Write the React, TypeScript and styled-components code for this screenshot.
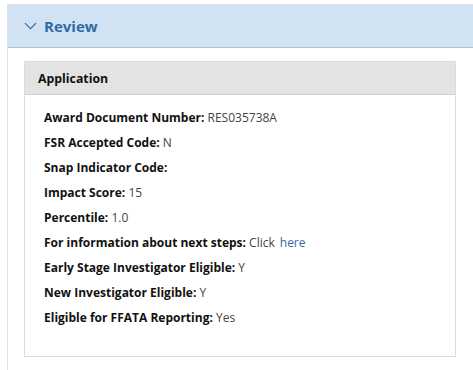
import styled, { createGlobalStyle } from "styled-components";

const Global = createGlobalStyle`
  body {
    margin: 0;
    background: #fff;
    font-family: "Open Sans", "Noto Sans", sans-serif;
    color: #333;
  }
`;

const Page = styled.div`
  padding: 4px 0 0 7px;
  height: 366px;
  overflow: hidden;
`;

const Panel = styled.section`
  border-left: 1px solid #dbe3ea;
  border-top: 1px solid #dde6ee;
  height: 100%;
`;

const PanelHeader = styled.div`
  display: flex;
  align-items: center;
  gap: 7px;
  height: 42px;
  padding-left: 16px;
  background: #d1e3f3;
  border-bottom: 1px solid #aec4d8;
`;

const Title = styled.h2`
  margin: 0;
  font-size: 15px;
  font-weight: 700;
  color: #2f6ca6;
`;

const PanelBody = styled.div`
  padding: 13px 17px 0 16px;
`;

const Card = styled.div`
  border: 1px solid #dcdcdc;
  height: 296px;
  box-sizing: border-box;
`;

const CardHeader = styled.div`
  display: flex;
  align-items: center;
  height: 32px;
  padding-left: 13px;
  background: #e3e3e3;
  border-bottom: 1px solid #cfcfcf;
  font-size: 12.3px;
  font-weight: 700;
  color: #111;
`;

const Fields = styled.div`
  display: flex;
  flex-direction: column;
  gap: 6.5px;
  padding: 14px 0 0 19px;
`;

const Row = styled.div`
  font-size: 12px;
  line-height: 18.5px;
  color: #444;
`;

const Label = styled.span`
  font-weight: 700;
  color: #111;
`;

const Link = styled.a`
  color: #2f6ca6;
  text-decoration: none;
  margin-left: 5px;
`;

const fields: [string, string][] = [
  ["Award Document Number:", "RES035738A"],
  ["FSR Accepted Code:", "N"],
  ["Snap Indicator Code:", ""],
  ["Impact Score:", "15"],
  ["Percentile:", "1.0"],
];

const more: [string, string][] = [
  ["Early Stage Investigator Eligible:", "Y"],
  ["New Investigator Eligible:", "Y"],
  ["Eligible for FFATA Reporting:", "Yes"],
];

function Chevron() {
  return (
    <svg width="13" height="8" viewBox="0 0 13 8" fill="none">
      <path d="M1 1.2 L6.5 6.7 L12 1.2" stroke="#2f6ca6" strokeWidth="1.2" />
    </svg>
  );
}

export default function App() {
  return (
    <Page>
      <Global />
      <Panel>
        <PanelHeader>
          <Chevron />
          <Title>Review</Title>
        </PanelHeader>
        <PanelBody>
          <Card>
            <CardHeader>Application</CardHeader>
            <Fields>
              {fields.map(([k, v]) => (
                <Row key={k}>
                  <Label>{k}</Label> {v}
                </Row>
              ))}
              <Row>
                <Label>For information about next steps:</Label> Click
                <Link href="#">here</Link>
              </Row>
              {more.map(([k, v]) => (
                <Row key={k}>
                  <Label>{k}</Label> {v}
                </Row>
              ))}
            </Fields>
          </Card>
        </PanelBody>
      </Panel>
    </Page>
  );
}
